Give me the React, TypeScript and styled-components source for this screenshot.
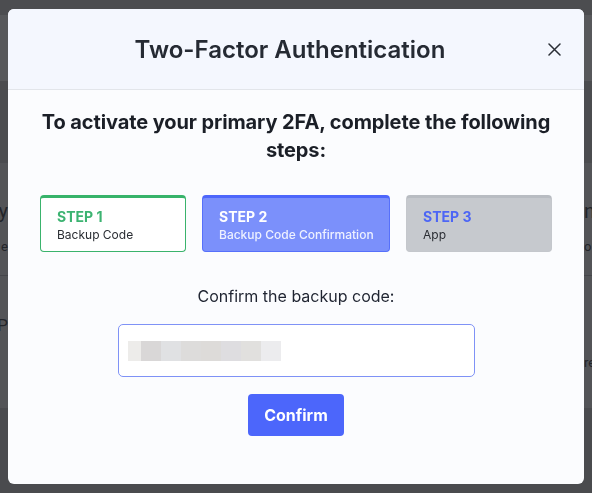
import React from 'react';
import styled, { createGlobalStyle } from 'styled-components';

const GlobalStyle = createGlobalStyle`
    html, body {
        margin: 0;
        padding: 0;
        height: 100%;
        overflow: hidden;
    }
    body {
        font-family: Inter, "Noto Sans", "Liberation Sans", sans-serif;
        background: #4f5053;
    }
`;

const redactedBlocks = [
    { w: 13, c: '#edecea' },
    { w: 20, c: '#d9d7d7' },
    { w: 20, c: '#e0e1e3' },
    { w: 20, c: '#dddcdb' },
    { w: 20, c: '#dddbd9' },
    { w: 20, c: '#dedde0' },
    { w: 20, c: '#e1e0de' },
    { w: 20, c: '#ececee' },
];

type StepState = 'done' | 'active' | 'todo';

const steps: { label: string; title: string; state: StepState }[] = [
    { label: 'STEP 1', title: 'Backup Code', state: 'done' },
    { label: 'STEP 2', title: 'Backup Code Confirmation', state: 'active' },
    { label: 'STEP 3', title: 'App', state: 'todo' },
];

export default function App() {
    return (
        <>
            <GlobalStyle />
            <Page>
                <Band $bg="#4c4d50" $h={15} />
                <Band $bg="#57585b" $h={66} />
                <Band $bg="#4b4c4f" $h={82} />
                <Section>
                    <EdgeRow $top={38}>
                        <EdgeLeft $size={20}>y</EdgeLeft>
                        <EdgeRight $size={20}>n</EdgeRight>
                    </EdgeRow>
                    <EdgeRow $top={19}>
                        <EdgeLeft $size={13}>e</EdgeLeft>
                        <EdgeRight $size={13}>o</EdgeRight>
                    </EdgeRow>
                    <Divider />
                    <EdgeRow $top={41}>
                        <EdgeLeft $size={17}>P</EdgeLeft>
                        <EdgeRight $size={17}> </EdgeRight>
                    </EdgeRow>
                    <EdgeRow $top={22}>
                        <EdgeLeft $size={13}> </EdgeLeft>
                        <EdgeRight $size={13}>re</EdgeRight>
                    </EdgeRow>
                </Section>
                <Band $bg="#4a4b4e" $h={85} />
            </Page>

            <Overlay>
                <Modal>
                    <Header>
                        <Title>Two-Factor Authentication</Title>
                        <CloseButton aria-label="Close">
                            <svg width="13" height="13" viewBox="0 0 13 13">
                                <path
                                    d="M1 1 L12 12 M12 1 L1 12"
                                    stroke="#2b2f36"
                                    strokeWidth="1.5"
                                    strokeLinecap="round"
                                />
                            </svg>
                        </CloseButton>
                    </Header>
                    <Body>
                        <Heading>
                            To activate your primary 2FA, complete the following steps:
                        </Heading>
                        <Steps>
                            {steps.map((s) => (
                                <StepCard key={s.label} $state={s.state}>
                                    <StepLabel $state={s.state}>{s.label}</StepLabel>
                                    <StepTitle $state={s.state}>{s.title}</StepTitle>
                                </StepCard>
                            ))}
                        </Steps>
                        <FieldLabel>Confirm the backup code:</FieldLabel>
                        <CodeInput>
                            <Redacted>
                                {redactedBlocks.map((b, i) => (
                                    <Pixel key={i} style={{ width: b.w, background: b.c }} />
                                ))}
                            </Redacted>
                        </CodeInput>
                        <ConfirmButton>Confirm</ConfirmButton>
                    </Body>
                </Modal>
            </Overlay>
        </>
    );
}

const Page = styled.div`
    display: flex;
    flex-direction: column;
    height: 493px;
`;

const Band = styled.div<{ $bg: string; $h: number }>`
    height: ${(p) => p.$h}px;
    background: ${(p) => p.$bg};
    flex-shrink: 0;
`;

const Section = styled.div`
    height: 245px;
    background: #535457;
    flex-shrink: 0;
    display: flex;
    flex-direction: column;
`;

const EdgeRow = styled.div<{ $top: number }>`
    display: flex;
    justify-content: space-between;
    margin-top: ${(p) => p.$top}px;
`;

const EdgeLeft = styled.div<{ $size: number }>`
    width: 8px;
    display: flex;
    justify-content: flex-end;
    white-space: pre;
    font-size: ${(p) => p.$size}px;
    line-height: 1;
    color: #23252a;
    font-family: Roboto, "Liberation Sans", sans-serif;
`;

const EdgeRight = styled.div<{ $size: number }>`
    width: 8px;
    display: flex;
    justify-content: flex-start;
    white-space: pre;
    font-size: ${(p) => p.$size}px;
    line-height: 1;
    color: #23252a;
    font-family: Roboto, "Liberation Sans", sans-serif;
`;

const Divider = styled.div`
    height: 1px;
    background: #45464a;
    margin-top: 22px;
`;

const Overlay = styled.div`
    position: fixed;
    inset: 0;
    padding: 9px 8px 0 8px;
`;

const Modal = styled.div`
    width: 576px;
    height: 475px;
    background: #fbfcfe;
    border-radius: 6px;
    overflow: hidden;
    display: flex;
    flex-direction: column;
`;

const Header = styled.div`
    position: relative;
    height: 80px;
    flex-shrink: 0;
    background: #f4f7fe;
    border-bottom: 1px solid #e2e5ea;
    display: flex;
    align-items: center;
    justify-content: center;
`;

const Title = styled.h2`
    margin: 0;
    font-size: 24px;
    font-weight: 600;
    color: #252a33;
    transform: translateX(-6px);
`;

const CloseButton = styled.button`
    position: absolute;
    right: 22px;
    top: 32px;
    width: 16px;
    height: 16px;
    padding: 0;
    border: 0;
    background: none;
    display: flex;
    align-items: center;
    justify-content: center;
    cursor: pointer;
`;

const Body = styled.div`
    display: flex;
    flex-direction: column;
    align-items: center;
    padding: 18px 32px 48px;
`;

const Heading = styled.h3`
    margin: 0 -8px;
    font-size: 20px;
    line-height: 28px;
    font-weight: 700;
    letter-spacing: -0.1px;
    color: #1b1f27;
    text-align: center;
`;

const Steps = styled.div`
    display: grid;
    grid-template-columns: 146px 188px 146px;
    gap: 16px;
    margin-top: 31px;
    width: 100%;
`;

const stepColors: Record<StepState, { bg: string; border: string; top: string; label: string; title: string }> = {
    done: { bg: '#ffffff', border: '#3ab36c', top: '#37b36a', label: '#3cb371', title: '#2a2d33' },
    active: { bg: '#7b90fb', border: '#5670fb', top: '#4d66fb', label: '#ffffff', title: '#eef1ff' },
    todo: { bg: '#c6c9ce', border: '#c4c7cc', top: '#b8bcc2', label: '#4d66f5', title: '#2a2d33' },
};

const StepCard = styled.div<{ $state: StepState }>`
    height: 57px;
    box-sizing: border-box;
    padding: 10px 16px 0;
    background: ${(p) => stepColors[p.$state].bg};
    border: 1px solid ${(p) => stepColors[p.$state].border};
    border-top: 3px solid ${(p) => stepColors[p.$state].top};
    border-radius: 4px;
    display: flex;
    flex-direction: column;
`;

const StepLabel = styled.div<{ $state: StepState }>`
    font-size: 14px;
    line-height: 18px;
    font-weight: 700;
    color: ${(p) => stepColors[p.$state].label};
`;

const StepTitle = styled.div<{ $state: StepState }>`
    font-size: 12px;
    line-height: 18px;
    font-weight: ${(p) => (p.$state === 'active' ? 500 : 400)};
    color: ${(p) => stepColors[p.$state].title};
    white-space: nowrap;
`;

const FieldLabel = styled.div`
    margin-top: 33px;
    font-size: 16px;
    line-height: 22px;
    color: #1f2431;
`;

const CodeInput = styled.div`
    margin-top: 17px;
    width: 357px;
    height: 53px;
    box-sizing: border-box;
    background: #ffffff;
    border: 1px solid #7f92f6;
    border-radius: 5px;
    display: flex;
    align-items: center;
    padding-left: 9px;
`;

const Redacted = styled.div`
    display: flex;
    height: 20px;
`;

const Pixel = styled.span`
    display: block;
    height: 100%;
`;

const ConfirmButton = styled.button`
    margin-top: 17px;
    width: 96px;
    height: 42px;
    border: 0;
    border-radius: 4px;
    background: #4c66fb;
    color: #ffffff;
    font-family: Inter, "Noto Sans", sans-serif;
    font-size: 16px;
    font-weight: 700;
    cursor: pointer;
`;
